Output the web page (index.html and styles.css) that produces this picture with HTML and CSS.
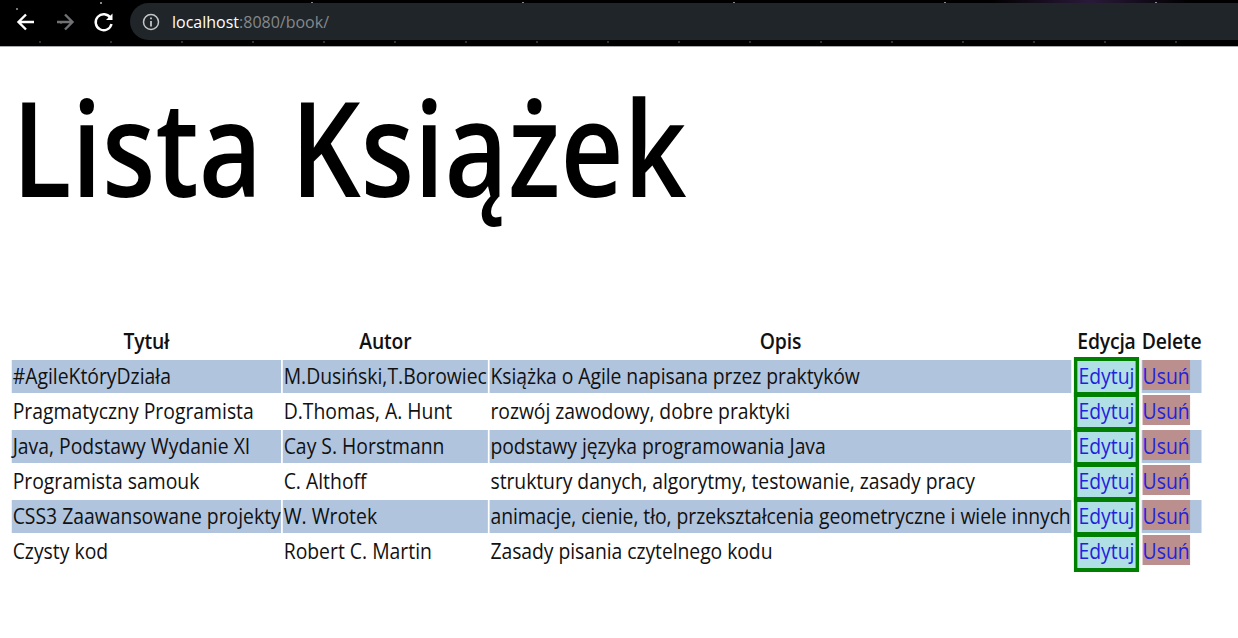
FILE: index.html
```html
<html>
<head>
    <title>Lista Książek</title>
    <meta charset="UTF-8">
    <link rel="stylesheet" href="styles.css">
</head>
<body>

    <div id="top_bar">
        <div id="nav_buttons">
            <svg class="nav_icon" width="26" height="26" viewBox="0 0 26 26"><path d="M21 13H6M13 5.500L5.500 13L13 20.500" fill="none" stroke="#fff" stroke-width="2.400"/></svg>
            <svg class="nav_icon" width="26" height="26" viewBox="0 0 26 26"><path d="M5 13H20M13 5.500L20.500 13L13 20.500" fill="none" stroke="#6f7174" stroke-width="2.400"/></svg>
            <svg class="nav_icon" width="26" height="26" viewBox="0 0 26 26"><path d="M19.500 9A8 8 0 1 0 20.500 15" fill="none" stroke="#fff" stroke-width="2.400"/><path d="M21.500 4.500V11H15Z" fill="#fff"/></svg>
        </div>
        <div id="url_bar">
            <svg width="20" height="20" viewBox="0 0 20 20"><circle cx="10" cy="10" r="7.500" fill="none" stroke="#c4c6c8" stroke-width="1.500"/><path d="M10 9V14.500M10 5.500V7.300" stroke="#c4c6c8" stroke-width="1.800"/></svg>
            <span id="url_text"><span class="url_host">localhost</span>:8080/book/</span>
        </div>
    </div>

    <h1 id="page_title">Lista Książek</h1>

    <div id="table_box">
    <table id="book_table">
        <colgroup>
            <col class="col_title">
            <col class="col_author">
            <col class="col_desc">
            <col class="col_edit">
            <col class="col_delete">
        </colgroup>
        <thead>
            <tr>
                <th>Tytuł</th>
                <th>Autor</th>
                <th>Opis</th>
                <th>Edycja</th>
                <th>Delete</th>
            </tr>
        </thead>
        <tbody>
            <tr>
                <td>#AgileKtóryDziała</td>
                <td>M.Dusiński,T.Borowiec</td>
                <td class="desc_cell">Książka o Agile napisana przez praktyków</td>
                <td class="edit_cell"><a href="#">Edytuj</a></td>
                <td class="delete_cell"><a href="#">Usuń</a></td>
            </tr>
            <tr>
                <td>Pragmatyczny Programista</td>
                <td>D.Thomas, A. Hunt</td>
                <td class="desc_cell">rozwój zawodowy, dobre praktyki</td>
                <td class="edit_cell"><a href="#">Edytuj</a></td>
                <td class="delete_cell"><a href="#">Usuń</a></td>
            </tr>
            <tr>
                <td>Java, Podstawy Wydanie XI</td>
                <td>Cay S. Horstmann</td>
                <td class="desc_cell">podstawy języka programowania Java</td>
                <td class="edit_cell"><a href="#">Edytuj</a></td>
                <td class="delete_cell"><a href="#">Usuń</a></td>
            </tr>
            <tr>
                <td>Programista samouk</td>
                <td>C. Althoff</td>
                <td class="desc_cell">struktury danych, algorytmy, testowanie, zasady pracy</td>
                <td class="edit_cell"><a href="#">Edytuj</a></td>
                <td class="delete_cell"><a href="#">Usuń</a></td>
            </tr>
            <tr>
                <td>CSS3 Zaawansowane projekty</td>
                <td>W. Wrotek</td>
                <td class="desc_cell">animacje, cienie, tło, przekształcenia geometryczne i wiele innych</td>
                <td class="edit_cell"><a href="#">Edytuj</a></td>
                <td class="delete_cell"><a href="#">Usuń</a></td>
            </tr>
            <tr>
                <td>Czysty kod</td>
                <td>Robert C. Martin</td>
                <td class="desc_cell">Zasady pisania czytelnego kodu</td>
                <td class="edit_cell"><a href="#">Edytuj</a></td>
                <td class="delete_cell"><a href="#">Usuń</a></td>
            </tr>
        </tbody>
    </table>
    </div>

</body>
</html>
```

FILE: styles.css
```css
body{
    margin: 0;
    font-family: "Open Sans", sans-serif;
    background-color: white;
    color: #111;
    overflow: hidden;
}

#top_bar{
    display: flex;
    align-items: center;
    height: 47px;
    box-sizing: border-box;
    padding-top: 3px;
    padding-bottom: 6px;
    background-color: #000;
    background-image:
        radial-gradient(circle at 17px 9px, #ddd 0, transparent 1.5px),
        radial-gradient(circle at 61px 23px, #999 0, transparent 1.2px),
        radial-gradient(circle at 101px 3px, #fff 0, transparent 1.5px),
        radial-gradient(circle at 40px 42px, #aaa 0, transparent 1px),
        linear-gradient(90deg, transparent 80%, #2a1a3a 88%, transparent 96%);
    background-size: 127px 46px, 93px 46px, 211px 46px, 71px 46px, 100% 3px;
    background-repeat: repeat-x, repeat-x, repeat-x, repeat-x, no-repeat;
    border-bottom: 1px solid #a9abad;
}

#nav_buttons{
    display: flex;
    gap: 13px;
    width: 130px;
    padding-left: 13px;
    box-sizing: border-box;
}

.nav_icon{
    flex: none;
}

#url_bar{
    flex: 1;
    display: flex;
    align-items: center;
    gap: 11px;
    height: 37px;
    padding-left: 11px;
    background-color: #202529;
    border-radius: 19px 0 0 19px;
}

#url_text{
    font-size: 16px;
    color: #85888b;
}

.url_host{
    color: #fff;
}

/* the page in the shot is squeezed sideways, so title and table are too */
#page_title{
    margin: 15px 0 93px 12px;
    font-size: 132px;
    line-height: 168px;
    font-weight: 600;
    color: #000;
    white-space: nowrap;
    transform: scaleX(0.83);
    transform-origin: left top;
}

#table_box{
    width: 1200px;
    margin-left: 10px;
    padding-bottom: 6px;
    overflow: hidden;
}

#book_table{
    table-layout: fixed;
    width: 1355px;
    border-spacing: 2px;
    font-size: 22px;
    transform: scaleX(0.88);
    transform-origin: left top;
}

.col_title{ width: 306px; }
.col_author{ width: 233px; }
.col_desc{ width: 661px; }
.col_edit{ width: 76px; }
.col_delete{ width: 68px; }

#book_table th{
    height: 30px;
    padding: 0 0 3px;
    font-weight: 600;
    letter-spacing: -0.2px;
    white-space: nowrap;
}

#book_table td{
    height: 30px;
    padding: 0 1px 3px;
    white-space: nowrap;
}

#book_table td.desc_cell{
    letter-spacing: -0.07px;
}

#book_table tbody tr:nth-child(odd) td{
    background-color: #b0c4de;
}

#book_table tbody tr td.edit_cell{
    padding: 0 5px;
    background-color: transparent;
}

.edit_cell a{
    display: block;
    line-height: 28px;
    padding-bottom: 4px;
    background-color: #b0e0e6;
    outline: 4px solid #008000;
    color: #2222dd;
    text-decoration: none;
    text-align: center;
}

.delete_cell a{
    background-color: #bc8f8f;
    color: #2222dd;
    text-decoration: none;
}
```
